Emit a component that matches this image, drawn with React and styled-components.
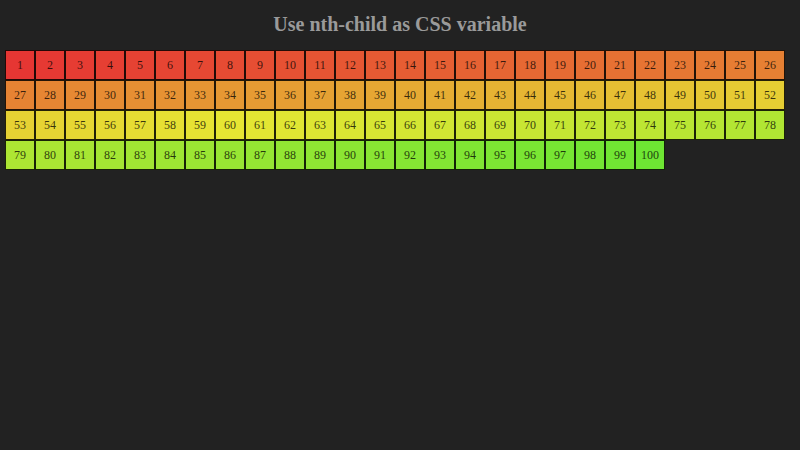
import React from 'react';
import styled, { createGlobalStyle } from 'styled-components';

const GlobalStyle = createGlobalStyle`
  html, body {
    margin: 0;
    padding: 0;
    background: #222222;
  }
`;

const Page = styled.div`
  padding: 0 5px;
  font-family: "Liberation Serif", "Times New Roman", serif;
`;

const Title = styled.h1`
  margin: 0;
  padding: 12px 0 14px;
  text-align: center;
  font-size: 20px;
  line-height: 24px;
  font-weight: bold;
  color: #9a9a9a;
`;

const Grid = styled.div`
  display: flex;
  flex-wrap: wrap;
  width: 780px;
`;

const Cell = styled.div`
  box-sizing: border-box;
  width: 30px;
  height: 30px;
  display: flex;
  align-items: center;
  justify-content: center;
  border: 1px solid rgba(0, 0, 0, 0.85);
  font-size: 12px;
  color: rgba(0, 0, 0, 0.75);
  background: ${props => `hsl(${props.$n}, 78%, 55%)`};
`;

const cells = Array.from({ length: 100 }, (_, i) => i + 1);

const App = () => (
  <>
    <GlobalStyle />
    <Page>
      <Title>Use nth-child as CSS variable</Title>
      <Grid>
        {cells.map(n => (
          <Cell key={n} $n={n}>{n}</Cell>
        ))}
      </Grid>
    </Page>
  </>
);

export default App;
